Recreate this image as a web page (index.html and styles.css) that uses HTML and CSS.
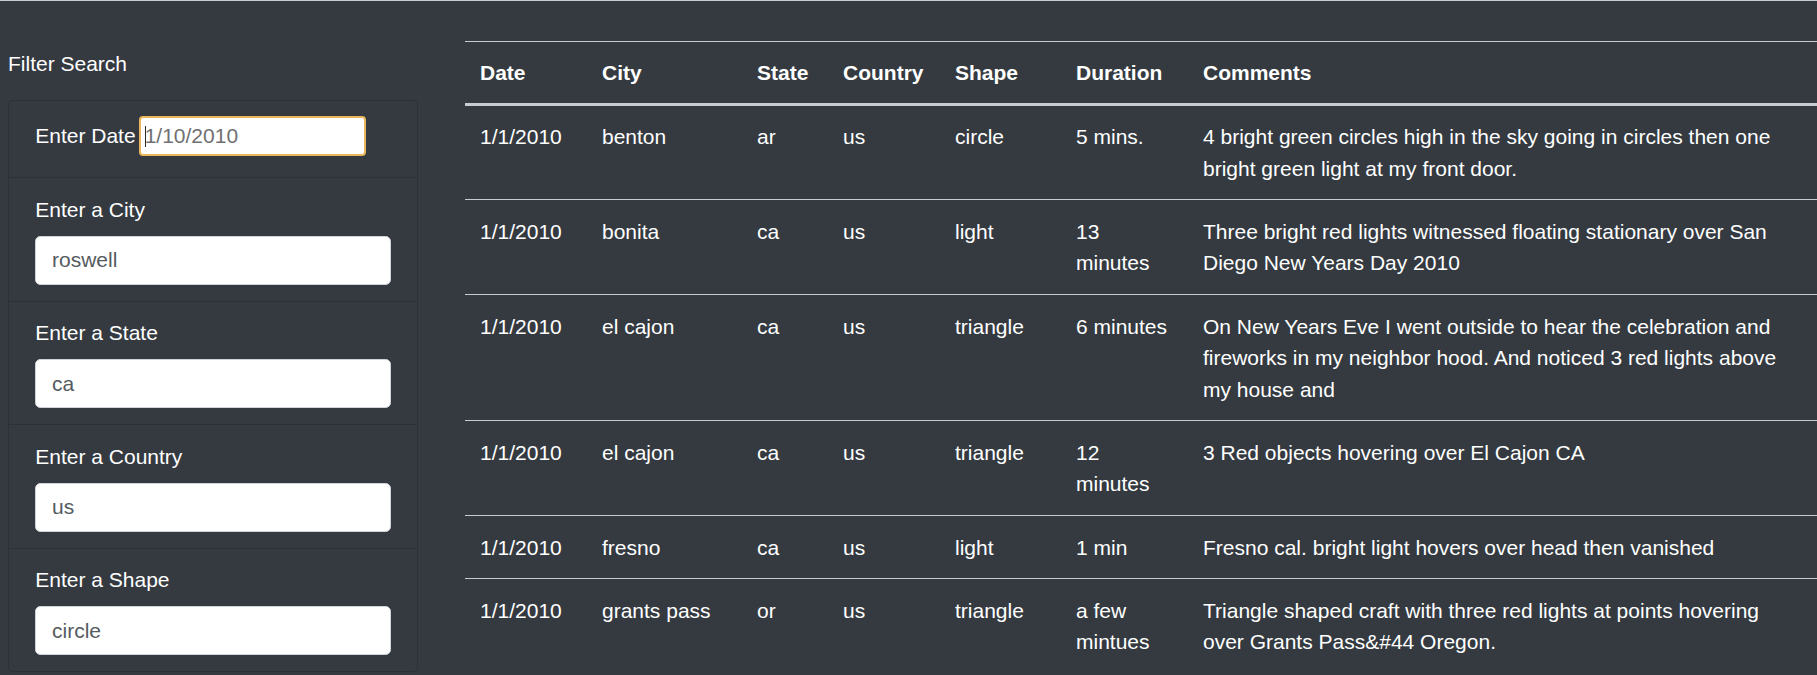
FILE: index.html
```html
<!DOCTYPE html>
<html lang="en">
<head>
<meta charset="utf-8">
<title>UFO Sightings</title>
<link rel="stylesheet" href="styles.css">
</head>
<body>
<div class="page">
  <aside class="sidebar">
    <div class="filter-title">Filter Search</div>
    <ul class="filters">
      <li class="filter-item filter-inline">
        <label class="inline-label" for="datetime">Enter Date</label><span class="date-wrap"><input class="date-input" id="datetime" type="text" value="1/10/2010"><span class="caret"></span></span>
      </li>
      <li class="filter-item">
        <label class="block-label" for="city">Enter a City</label>
        <input class="form-control" id="city" type="text" value="roswell">
      </li>
      <li class="filter-item">
        <label class="block-label" for="state">Enter a State</label>
        <input class="form-control" id="state" type="text" value="ca">
      </li>
      <li class="filter-item">
        <label class="block-label" for="country">Enter a Country</label>
        <input class="form-control" id="country" type="text" value="us">
      </li>
      <li class="filter-item">
        <label class="block-label" for="shape">Enter a Shape</label>
        <input class="form-control" id="shape" type="text" value="circle">
      </li>
    </ul>
  </aside>
  <main class="results">
    <table class="ufo-table">
      <colgroup>
        <col class="c-date">
        <col class="c-city">
        <col class="c-state">
        <col class="c-country">
        <col class="c-shape">
        <col class="c-duration">
        <col class="c-comments">
      </colgroup>
      <thead>
        <tr>
          <th>Date</th>
          <th>City</th>
          <th>State</th>
          <th>Country</th>
          <th>Shape</th>
          <th>Duration</th>
          <th>Comments</th>
        </tr>
      </thead>
      <tbody>
        <tr>
          <td>1/1/2010</td><td>benton</td><td>ar</td><td>us</td><td>circle</td><td>5 mins.</td>
          <td>4 bright green circles high in the sky going in circles then one bright green light at my front door.</td>
        </tr>
        <tr>
          <td>1/1/2010</td><td>bonita</td><td>ca</td><td>us</td><td>light</td><td>13 minutes</td>
          <td>Three bright red lights witnessed floating stationary over San Diego New Years Day 2010</td>
        </tr>
        <tr>
          <td>1/1/2010</td><td>el cajon</td><td>ca</td><td>us</td><td>triangle</td><td>6 minutes</td>
          <td>On New Years Eve I went outside to hear the celebration and fireworks in my neighbor hood. And noticed 3 red lights above my house and</td>
        </tr>
        <tr>
          <td>1/1/2010</td><td>el cajon</td><td>ca</td><td>us</td><td>triangle</td><td>12 minutes</td>
          <td>3 Red objects hovering over El Cajon CA</td>
        </tr>
        <tr>
          <td>1/1/2010</td><td>fresno</td><td>ca</td><td>us</td><td>light</td><td>1 min</td>
          <td>Fresno cal. bright light hovers over head then vanished</td>
        </tr>
        <tr>
          <td>1/1/2010</td><td>grants pass</td><td>or</td><td>us</td><td>triangle</td><td>a few mintues</td>
          <td>Triangle shaped craft with three red lights at points hovering over Grants Pass&amp;#44 Oregon.</td>
        </tr>
      </tbody>
    </table>
  </main>
</div>
</body>
</html>
```

FILE: styles.css
```css
html, body {
  margin: 0;
  padding: 0;
}

body {
  background: #343a40;
  color: #ffffff;
  font-family: "Liberation Sans", Arial, sans-serif;
  font-size: 21px;
  line-height: 31.5px;
  border-top: 1px solid #c9ccd0;
  overflow: hidden;
}

.page {
  display: flex;
  align-items: flex-start;
  padding-left: 8px;
}

.sidebar {
  flex: 0 0 410px;
  width: 410px;
  padding-top: 47px;
}

.filter-title {
  margin-bottom: 20.5px;
}

.filters {
  list-style: none;
  margin: 0;
  padding: 0;
  border: 1px solid rgba(0, 0, 0, 0.14);
  border-radius: 5px;
}

.filter-item {
  padding: 15.75px 26.25px;
  border-top: 1px solid rgba(0, 0, 0, 0.14);
}

.filter-item:first-child {
  border-top: 0;
  padding-top: 15px;
  padding-bottom: 21px;
}

.filter-inline {
  display: flex;
  align-items: baseline;
}

.inline-label {
  margin-right: 3px;
}

.block-label {
  display: block;
  margin-bottom: 10.5px;
}

.date-wrap {
  position: relative;
  display: inline-block;
}

.date-input {
  box-sizing: border-box;
  width: 227px;
  height: 40px;
  padding: 0 4px;
  border: 2px solid #ecb75c;
  border-radius: 4px;
  outline: none;
  background: #ffffff;
  color: #707070;
  font-family: "Liberation Sans", Arial, sans-serif;
  font-size: 21px;
  vertical-align: baseline;
}

.caret {
  position: absolute;
  left: 6px;
  top: 10px;
  width: 1px;
  height: 21px;
  background: #2a2a2a;
}

.form-control {
  display: block;
  box-sizing: border-box;
  width: 100%;
  height: 49px;
  padding: 7.9px 15.75px;
  border: 1px solid #ced4da;
  border-radius: 5.25px;
  background: #ffffff;
  color: #555b61;
  font-family: "Liberation Sans", Arial, sans-serif;
  font-size: 21px;
  line-height: 31.5px;
}

.results {
  flex: 1 1 auto;
  margin-left: 47px;
  padding-top: 40px;
  min-width: 0;
}

.ufo-table {
  width: 1352px;
  table-layout: fixed;
  border-collapse: collapse;
  border-top: 1px solid #c8cbcf;
}

.c-date { width: 122px; }
.c-city { width: 155px; }
.c-state { width: 86px; }
.c-country { width: 112px; }
.c-shape { width: 121px; }
.c-duration { width: 127px; }
.c-comments { width: 629px; }

.ufo-table th,
.ufo-table td {
  padding: 15.25px 15px;
  text-align: left;
}

.ufo-table th {
  font-weight: bold;
  vertical-align: bottom;
  border-bottom: 3px solid #c8cbcf;
  padding-top: 15px;
  padding-bottom: 14px;
}

.ufo-table td {
  vertical-align: top;
  border-top: 1px solid #c8cbcf;
  padding-top: 15.5px;
}
```
